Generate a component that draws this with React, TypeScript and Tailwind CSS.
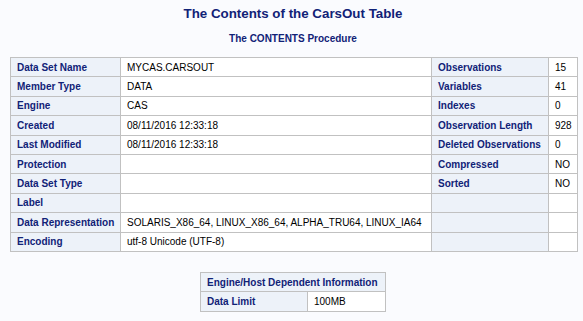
import React from "react";

type Row = [string, string, string, string];

const rows: Row[] = [
  ["Data Set Name", "MYCAS.CARSOUT", "Observations", "15"],
  ["Member Type", "DATA", "Variables", "41"],
  ["Engine", "CAS", "Indexes", "0"],
  ["Created", "08/11/2016 12:33:18", "Observation Length", "928"],
  ["Last Modified", "08/11/2016 12:33:18", "Deleted Observations", "0"],
  ["Protection", "", "Compressed", "NO"],
  ["Data Set Type", "", "Sorted", "NO"],
  ["Label", "", "", ""],
  ["Data Representation", "SOLARIS_X86_64, LINUX_X86_64, ALPHA_TRU64, LINUX_IA64", "", ""],
  ["Encoding", "utf-8 Unicode (UTF-8)", "", ""],
];

const th =
  "border border-[#c1c1c1] bg-[#edf2f9] text-[#112277] font-bold text-left align-top px-[6px] py-[3.5px] leading-[11.4px] whitespace-nowrap";
const td =
  "border border-[#c1c1c1] bg-white text-black text-left align-top px-[6px] py-[3.5px] leading-[11.4px] whitespace-nowrap";

export default function App() {
  return (
    <div
      className="min-h-screen bg-[#fafbfe] pl-[3px] text-[10px]"
      style={{ fontFamily: '"Liberation Sans", Arial, sans-serif' }}
    >
      <h1 className="pt-[6px] text-center text-[13.33px] font-bold leading-[16px] text-[#112277]">
        The Contents of the CarsOut Table
      </h1>
      <h2 className="mt-[11px] text-center text-[10px] font-bold leading-[12px] text-[#112277]">
        The CONTENTS Procedure
      </h2>

      <table className="mt-[12px] ml-[7px] w-[567px] table-fixed border-collapse border border-[#c1c1c1]">
        <colgroup>
          <col className="w-[110px]" />
          <col className="w-[311px]" />
          <col className="w-[117px]" />
          <col className="w-[29px]" />
        </colgroup>
        <tbody>
          {rows.map((r) => (
            <tr key={r[0]}>
              <th className={th}>{r[0]}</th>
              <td className={td}>{r[1]}</td>
              <th className={th}>{r[2]}</th>
              <td className={td}>{r[3]}</td>
            </tr>
          ))}
        </tbody>
      </table>

      <table className="mx-auto mt-[20px] w-[185px] table-fixed border-collapse border border-[#c1c1c1]">
        <colgroup>
          <col className="w-[107px]" />
          <col className="w-[78px]" />
        </colgroup>
        <thead>
          <tr>
            <th colSpan={2} className={th + " text-center"}>
              Engine/Host Dependent Information
            </th>
          </tr>
        </thead>
        <tbody>
          <tr>
            <th className={th}>Data Limit</th>
            <td className={td}>100MB</td>
          </tr>
        </tbody>
      </table>
    </div>
  );
}
